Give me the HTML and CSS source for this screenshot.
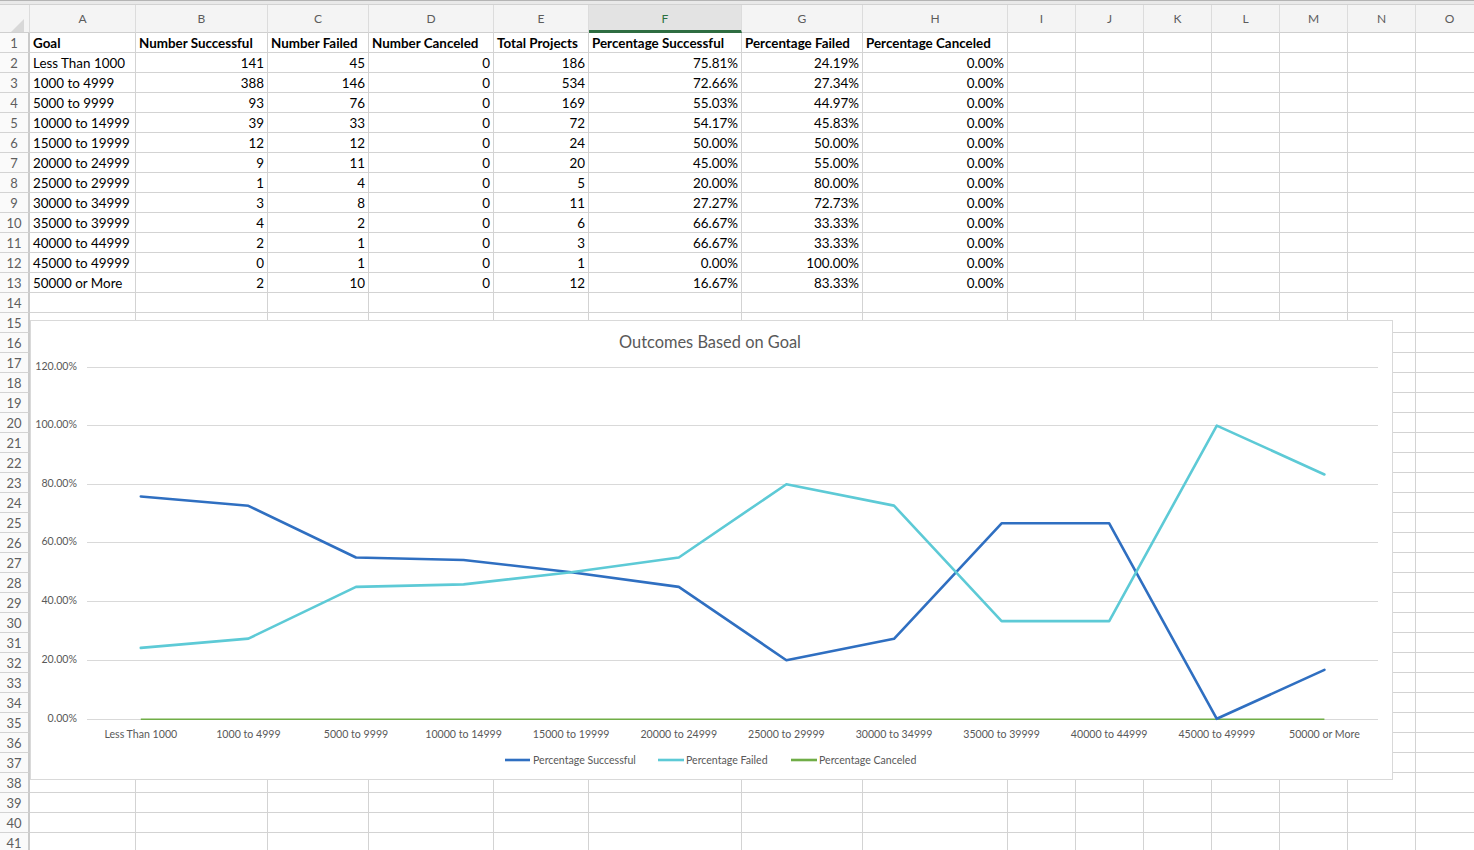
FILE: index.html
```html
<!DOCTYPE html>
<html>
<head>
<meta charset="utf-8">
<title>Outcomes Based on Goal</title>
<link rel="stylesheet" href="styles.css">
</head>
<body>
<div class="topbar"></div>
<div class="sheet">
<div class="col corner"></div><div class="col">A</div><div class="col">B</div><div class="col">C</div><div class="col">D</div><div class="col">E</div><div class="col sel">F</div><div class="col">G</div><div class="col">H</div><div class="col">I</div><div class="col">J</div><div class="col">K</div><div class="col">L</div><div class="col">M</div><div class="col">N</div><div class="col">O</div>

<div class="rn">1</div><div class="c b">Goal</div><div class="c b">Number Successful</div><div class="c b">Number Failed</div><div class="c b">Number Canceled</div><div class="c b">Total Projects</div><div class="c b">Percentage Successful</div><div class="c b">Percentage Failed</div><div class="c b">Percentage Canceled</div><div></div><div></div><div></div><div></div><div></div><div></div><div></div>

<div class="rn">2</div><div class="c">Less Than 1000</div><div class="c n">141</div><div class="c n">45</div><div class="c n">0</div><div class="c n">186</div><div class="c n">75.81%</div><div class="c n">24.19%</div><div class="c n">0.00%</div><div></div><div></div><div></div><div></div><div></div><div></div><div></div>

<div class="rn">3</div><div class="c">1000 to 4999</div><div class="c n">388</div><div class="c n">146</div><div class="c n">0</div><div class="c n">534</div><div class="c n">72.66%</div><div class="c n">27.34%</div><div class="c n">0.00%</div><div></div><div></div><div></div><div></div><div></div><div></div><div></div>

<div class="rn">4</div><div class="c">5000 to 9999</div><div class="c n">93</div><div class="c n">76</div><div class="c n">0</div><div class="c n">169</div><div class="c n">55.03%</div><div class="c n">44.97%</div><div class="c n">0.00%</div><div></div><div></div><div></div><div></div><div></div><div></div><div></div>

<div class="rn">5</div><div class="c">10000 to 14999</div><div class="c n">39</div><div class="c n">33</div><div class="c n">0</div><div class="c n">72</div><div class="c n">54.17%</div><div class="c n">45.83%</div><div class="c n">0.00%</div><div></div><div></div><div></div><div></div><div></div><div></div><div></div>

<div class="rn">6</div><div class="c">15000 to 19999</div><div class="c n">12</div><div class="c n">12</div><div class="c n">0</div><div class="c n">24</div><div class="c n">50.00%</div><div class="c n">50.00%</div><div class="c n">0.00%</div><div></div><div></div><div></div><div></div><div></div><div></div><div></div>

<div class="rn">7</div><div class="c">20000 to 24999</div><div class="c n">9</div><div class="c n">11</div><div class="c n">0</div><div class="c n">20</div><div class="c n">45.00%</div><div class="c n">55.00%</div><div class="c n">0.00%</div><div></div><div></div><div></div><div></div><div></div><div></div><div></div>

<div class="rn">8</div><div class="c">25000 to 29999</div><div class="c n">1</div><div class="c n">4</div><div class="c n">0</div><div class="c n">5</div><div class="c n">20.00%</div><div class="c n">80.00%</div><div class="c n">0.00%</div><div></div><div></div><div></div><div></div><div></div><div></div><div></div>

<div class="rn">9</div><div class="c">30000 to 34999</div><div class="c n">3</div><div class="c n">8</div><div class="c n">0</div><div class="c n">11</div><div class="c n">27.27%</div><div class="c n">72.73%</div><div class="c n">0.00%</div><div></div><div></div><div></div><div></div><div></div><div></div><div></div>

<div class="rn">10</div><div class="c">35000 to 39999</div><div class="c n">4</div><div class="c n">2</div><div class="c n">0</div><div class="c n">6</div><div class="c n">66.67%</div><div class="c n">33.33%</div><div class="c n">0.00%</div><div></div><div></div><div></div><div></div><div></div><div></div><div></div>

<div class="rn">11</div><div class="c">40000 to 44999</div><div class="c n">2</div><div class="c n">1</div><div class="c n">0</div><div class="c n">3</div><div class="c n">66.67%</div><div class="c n">33.33%</div><div class="c n">0.00%</div><div></div><div></div><div></div><div></div><div></div><div></div><div></div>

<div class="rn">12</div><div class="c">45000 to 49999</div><div class="c n">0</div><div class="c n">1</div><div class="c n">0</div><div class="c n">1</div><div class="c n">0.00%</div><div class="c n">100.00%</div><div class="c n">0.00%</div><div></div><div></div><div></div><div></div><div></div><div></div><div></div>

<div class="rn">13</div><div class="c">50000 or More</div><div class="c n">2</div><div class="c n">10</div><div class="c n">0</div><div class="c n">12</div><div class="c n">16.67%</div><div class="c n">83.33%</div><div class="c n">0.00%</div><div></div><div></div><div></div><div></div><div></div><div></div><div></div>

<div class="rn">14</div><div></div><div></div><div></div><div></div><div></div><div></div><div></div><div></div><div></div><div></div><div></div><div></div><div></div><div></div><div></div>
<div class="rn">15</div><div></div><div></div><div></div><div></div><div></div><div></div><div></div><div></div><div></div><div></div><div></div><div></div><div></div><div></div><div></div>
<div class="rn">16</div><div></div><div></div><div></div><div></div><div></div><div></div><div></div><div></div><div></div><div></div><div></div><div></div><div></div><div></div><div></div>
<div class="rn">17</div><div></div><div></div><div></div><div></div><div></div><div></div><div></div><div></div><div></div><div></div><div></div><div></div><div></div><div></div><div></div>
<div class="rn">18</div><div></div><div></div><div></div><div></div><div></div><div></div><div></div><div></div><div></div><div></div><div></div><div></div><div></div><div></div><div></div>
<div class="rn">19</div><div></div><div></div><div></div><div></div><div></div><div></div><div></div><div></div><div></div><div></div><div></div><div></div><div></div><div></div><div></div>
<div class="rn">20</div><div></div><div></div><div></div><div></div><div></div><div></div><div></div><div></div><div></div><div></div><div></div><div></div><div></div><div></div><div></div>
<div class="rn">21</div><div></div><div></div><div></div><div></div><div></div><div></div><div></div><div></div><div></div><div></div><div></div><div></div><div></div><div></div><div></div>
<div class="rn">22</div><div></div><div></div><div></div><div></div><div></div><div></div><div></div><div></div><div></div><div></div><div></div><div></div><div></div><div></div><div></div>
<div class="rn">23</div><div></div><div></div><div></div><div></div><div></div><div></div><div></div><div></div><div></div><div></div><div></div><div></div><div></div><div></div><div></div>
<div class="rn">24</div><div></div><div></div><div></div><div></div><div></div><div></div><div></div><div></div><div></div><div></div><div></div><div></div><div></div><div></div><div></div>
<div class="rn">25</div><div></div><div></div><div></div><div></div><div></div><div></div><div></div><div></div><div></div><div></div><div></div><div></div><div></div><div></div><div></div>
<div class="rn">26</div><div></div><div></div><div></div><div></div><div></div><div></div><div></div><div></div><div></div><div></div><div></div><div></div><div></div><div></div><div></div>
<div class="rn">27</div><div></div><div></div><div></div><div></div><div></div><div></div><div></div><div></div><div></div><div></div><div></div><div></div><div></div><div></div><div></div>
<div class="rn">28</div><div></div><div></div><div></div><div></div><div></div><div></div><div></div><div></div><div></div><div></div><div></div><div></div><div></div><div></div><div></div>
<div class="rn">29</div><div></div><div></div><div></div><div></div><div></div><div></div><div></div><div></div><div></div><div></div><div></div><div></div><div></div><div></div><div></div>
<div class="rn">30</div><div></div><div></div><div></div><div></div><div></div><div></div><div></div><div></div><div></div><div></div><div></div><div></div><div></div><div></div><div></div>
<div class="rn">31</div><div></div><div></div><div></div><div></div><div></div><div></div><div></div><div></div><div></div><div></div><div></div><div></div><div></div><div></div><div></div>
<div class="rn">32</div><div></div><div></div><div></div><div></div><div></div><div></div><div></div><div></div><div></div><div></div><div></div><div></div><div></div><div></div><div></div>
<div class="rn">33</div><div></div><div></div><div></div><div></div><div></div><div></div><div></div><div></div><div></div><div></div><div></div><div></div><div></div><div></div><div></div>
<div class="rn">34</div><div></div><div></div><div></div><div></div><div></div><div></div><div></div><div></div><div></div><div></div><div></div><div></div><div></div><div></div><div></div>
<div class="rn">35</div><div></div><div></div><div></div><div></div><div></div><div></div><div></div><div></div><div></div><div></div><div></div><div></div><div></div><div></div><div></div>
<div class="rn">36</div><div></div><div></div><div></div><div></div><div></div><div></div><div></div><div></div><div></div><div></div><div></div><div></div><div></div><div></div><div></div>
<div class="rn">37</div><div></div><div></div><div></div><div></div><div></div><div></div><div></div><div></div><div></div><div></div><div></div><div></div><div></div><div></div><div></div>
<div class="rn">38</div><div></div><div></div><div></div><div></div><div></div><div></div><div></div><div></div><div></div><div></div><div></div><div></div><div></div><div></div><div></div>
<div class="rn">39</div><div></div><div></div><div></div><div></div><div></div><div></div><div></div><div></div><div></div><div></div><div></div><div></div><div></div><div></div><div></div>
<div class="rn">40</div><div></div><div></div><div></div><div></div><div></div><div></div><div></div><div></div><div></div><div></div><div></div><div></div><div></div><div></div><div></div>
<div class="rn">41</div><div></div><div></div><div></div><div></div><div></div><div></div><div></div><div></div><div></div><div></div><div></div><div></div><div></div><div></div><div></div>
</div>

<div class="chart">
<svg width="1363" height="460" viewBox="30 320 1363 460" xmlns="http://www.w3.org/2000/svg">
<rect x="30.5" y="320.5" width="1362" height="459" fill="#fff" stroke="#d9d9d9"/>
<text class="ctitle" x="710" y="348" text-anchor="middle">Outcomes Based on Goal</text>
<g stroke="#d9d9d9" stroke-width="1">
<line x1="87" x2="1378" y1="367.5" y2="367.5"/>
<line x1="87" x2="1378" y1="425.5" y2="425.5"/>
<line x1="87" x2="1378" y1="484.5" y2="484.5"/>
<line x1="87" x2="1378" y1="542.5" y2="542.5"/>
<line x1="87" x2="1378" y1="601.5" y2="601.5"/>
<line x1="87" x2="1378" y1="660.5" y2="660.5"/>
<line x1="87" x2="1378" y1="719.5" y2="719.5"/>
</g>
<g class="ax" text-anchor="end">
<text x="77" y="370">120.00%</text>
<text x="77" y="428">100.00%</text>
<text x="77" y="487">80.00%</text>
<text x="77" y="545">60.00%</text>
<text x="77" y="604">40.00%</text>
<text x="77" y="663">20.00%</text>
<text x="77" y="722">0.00%</text>
</g>
<g class="ax" text-anchor="middle">
<text x="140.8" y="738">Less Than 1000</text>
<text x="248.4" y="738">1000 to 4999</text>
<text x="356" y="738">5000 to 9999</text>
<text x="463.6" y="738">10000 to 14999</text>
<text x="571.2" y="738">15000 to 19999</text>
<text x="678.8" y="738">20000 to 24999</text>
<text x="786.4" y="738">25000 to 29999</text>
<text x="894" y="738">30000 to 34999</text>
<text x="1001.6" y="738">35000 to 39999</text>
<text x="1109.2" y="738">40000 to 44999</text>
<text x="1216.8" y="738">45000 to 49999</text>
<text x="1324.4" y="738">50000 or More</text>
</g>
<polyline fill="none" stroke="#70ad47" stroke-width="1.6" points="140.8,719.2 1324.4,719.2"/>
<polyline fill="none" stroke="#2f6fc1" stroke-width="2.6" stroke-linejoin="round" stroke-linecap="round" points="140.8,496.5 248.4,505.8 356,557.5 463.6,560 571.2,572.2 678.8,586.9 786.4,660.2 894,638.8 1001.6,523.3 1109.2,523.3 1216.8,718.8 1324.4,669.9"/>
<polyline fill="none" stroke="#5dcad6" stroke-width="2.6" stroke-linejoin="round" stroke-linecap="round" points="140.8,647.9 248.4,638.6 356,586.9 463.6,584.4 571.2,572.2 678.8,557.5 786.4,484.2 894,505.6 1001.6,621.1 1109.2,621.1 1216.8,425.6 1324.4,474.5"/>
<g class="ax">
<line x1="505" x2="530" y1="760" y2="760" stroke="#2f6fc1" stroke-width="2.6"/>
<text x="533" y="763.5">Percentage Successful</text>
<line x1="658" x2="684" y1="760" y2="760" stroke="#5dcad6" stroke-width="2.6"/>
<text x="686" y="763.5">Percentage Failed</text>
<line x1="791" x2="817" y1="760" y2="760" stroke="#70ad47" stroke-width="2.6"/>
<text x="819" y="763.5">Percentage Canceled</text>
</g>
</svg>
</div>
</body>
</html>
```

FILE: styles.css
```css
html, body {
  margin: 0;
  padding: 0;
  overflow: hidden;
  background: #fff;
}
body {
  position: relative;
  width: 1474px;
  height: 850px;
  font-family: Lato, "Open Sans", sans-serif;
}
.topbar {
  height: 3px;
  border-top: 1px solid #b4b4b4;
  border-bottom: 1px solid #d2d2d2;
  background: #e9e9e9;
}
.sheet {
  display: grid;
  grid-template-columns: 30px 106px 132px 101px 125px 95px 153px 121px 145px repeat(7, 68px);
  grid-template-rows: 28px;
  grid-auto-rows: 20px;
}
.sheet > div {
  box-sizing: border-box;
  border-right: 1px solid #d3d3d3;
  border-bottom: 1px solid #d3d3d3;
  font-size: 13.4px;
  line-height: 21px;
  white-space: nowrap;
  overflow: hidden;
  color: #000;
}
.sheet > .col {
  background: #f4f4f4;
  text-align: center;
  color: #5c5c5c;
  font-size: 12px;
  line-height: 28px;
  border-right-color: #dcdcdc;
  border-bottom-color: #cfcfcf;
}
.sheet > .col.sel {
  background: #e3e3e3;
  color: #2b7040;
  border-bottom: 3px solid #2e6d41;
  line-height: 27px;
}
.corner {
  position: relative;
}
.corner::after {
  content: "";
  position: absolute;
  left: 10px;
  top: 14px;
  width: 14px;
  height: 14px;
  background: #d8d8d8;
  clip-path: polygon(100% 0, 100% 100%, 0 100%);
}
.sheet > .rn {
  background: #fafafa;
  text-align: center;
  color: #5e5e5e;
  font-size: 13px;
  border-right: 2px solid #cbcbcb;
}
.c {
  padding: 0 3px;
}
.n {
  text-align: right;
}
.b {
  font-weight: 700;
}
.chart {
  position: absolute;
  left: 30px;
  top: 320px;
  width: 1363px;
  height: 460px;
}
.chart svg {
  display: block;
}
.ctitle {
  font-family: Lato, "Open Sans", sans-serif;
  font-size: 16.4px;
  fill: #595959;
}
.ax {
  font-family: Lato, "Open Sans", sans-serif;
  font-size: 10.6px;
  fill: #595959;
}
```
